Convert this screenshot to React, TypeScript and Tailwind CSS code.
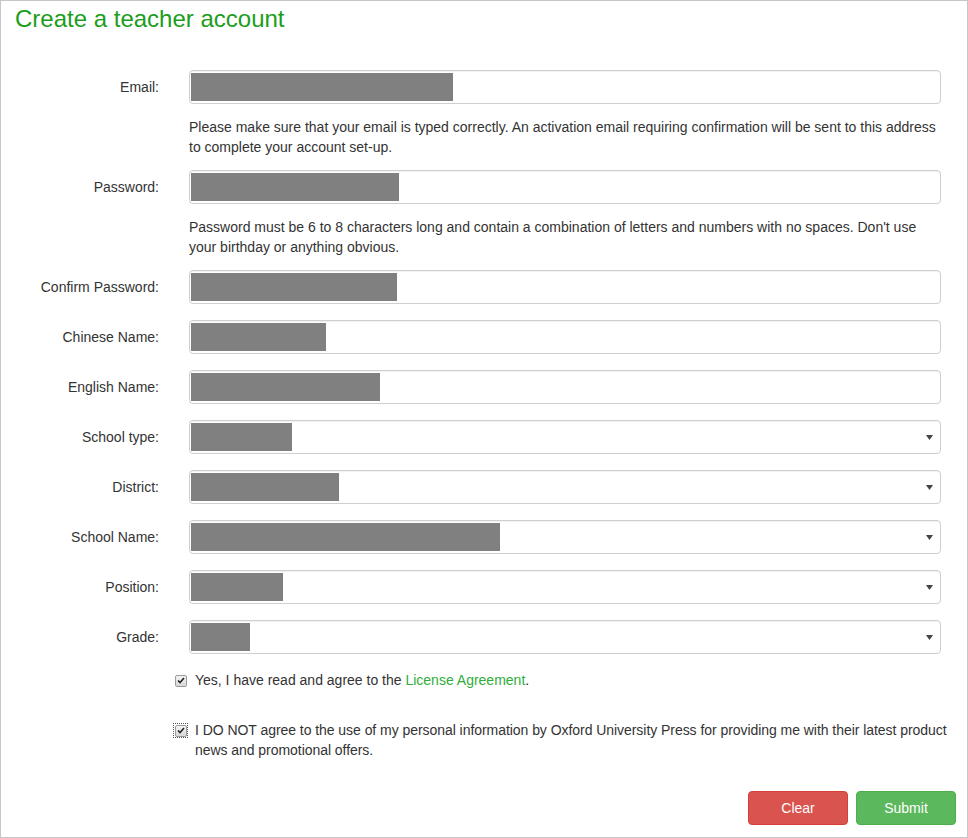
import React from 'react';

type Field = {
  label: string;
  redact: number;
  select?: boolean;
  help?: string;
};

const fields: Field[] = [
  {
    label: 'Email:',
    redact: 262,
    help: 'Please make sure that your email is typed correctly. An activation email requiring confirmation will be sent to this address to complete your account set-up.',
  },
  {
    label: 'Password:',
    redact: 208,
    help: "Password must be 6 to 8 characters long and contain a combination of letters and numbers with no spaces. Don't use your birthday or anything obvious.",
  },
  { label: 'Confirm Password:', redact: 206 },
  { label: 'Chinese Name:', redact: 135 },
  { label: 'English Name:', redact: 189 },
  { label: 'School type:', redact: 101, select: true },
  { label: 'District:', redact: 148, select: true },
  { label: 'School Name:', redact: 309, select: true },
  { label: 'Position:', redact: 92, select: true },
  { label: 'Grade:', redact: 59, select: true },
];

function Caret() {
  return (
    <svg className="absolute right-[7px] top-[14px]" width="7" height="5" viewBox="0 0 7 5">
      <path d="M0 0h7L3.5 5z" fill="#444" />
    </svg>
  );
}

function FakeCheck({ focused }: { focused?: boolean }) {
  return (
    <span
      className={
        'mt-[4px] flex h-[13px] w-[13px] shrink-0 items-center justify-center ' +
        (focused ? 'outline outline-1 outline-dotted outline-[#555]' : '')
      }
    >
      <span className="flex h-[12px] w-[12px] items-center justify-center rounded-[2px] border border-[#9a9a9a] bg-gradient-to-b from-[#f4f4f4] to-[#d8d8d8]">
        <svg width="8" height="7" viewBox="0 0 8 7">
          <path d="M1 3.5l2 2L7 1" fill="none" stroke="#222" strokeWidth="1.6" />
        </svg>
      </span>
    </span>
  );
}

export default function App() {
  return (
    <div className="h-[838px] w-[968px] border border-[#c6c6c6] bg-white font-['Liberation_Sans',Arial,sans-serif] text-[14px] leading-[20px] text-[#333]">
      <h1 className="pl-[14px] pt-[4px] text-[24px] leading-[28px] text-[#1b9e1b]">Create a teacher account</h1>

      <div className="mt-[37px] pr-[26px]">
        {fields.map((f) => (
          <div key={f.label} className={f.help ? 'mb-[13px]' : 'mb-[16px]'}>
            <div className="grid grid-cols-[158px_1fr] items-center gap-x-[30px]">
              <label className="text-right">{f.label}</label>
              <div className="relative h-[34px] rounded-[4px] border border-[#cfcfcf] bg-white shadow-[inset_0_1px_1px_rgba(0,0,0,0.06)]">
                <div
                  className="ml-[1px] mt-[2px] h-[28px] bg-[#808080]"
                  style={{ width: f.redact }}
                />
                {f.select && <Caret />}
              </div>
            </div>
            {f.help && <p className="ml-[188px] pt-[13px]">{f.help}</p>}
          </div>
        ))}
      </div>

      <div className="flex gap-[8px] pl-[173px]">
        <FakeCheck />
        <span>
          Yes, I have read and agree to the <a className="text-[#2ead3a]">License Agreement</a>.
        </span>
      </div>

      <div className="mt-[30px] flex gap-[8px] pl-[173px]">
        <FakeCheck focused />
        <span className="w-[775px] tracking-[-0.05px]">
          I DO NOT agree to the use of my personal information by Oxford University Press for providing me with their latest
          product news and promotional offers.
        </span>
      </div>

      <div className="mt-[31px] flex justify-end gap-[8px] pr-[11px]">
        <button className="h-[34px] w-[100px] rounded-[4px] border border-[#d43f3a] bg-[#d9534f] text-white">Clear</button>
        <button className="h-[34px] w-[100px] rounded-[4px] border border-[#4cae4c] bg-[#5cb85c] text-white">Submit</button>
      </div>
    </div>
  );
}
